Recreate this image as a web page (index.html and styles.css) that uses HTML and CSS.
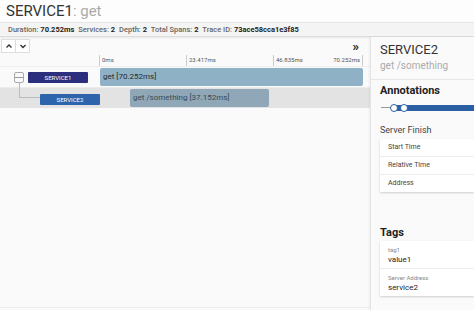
FILE: index.html
```html
<!DOCTYPE html>
<html lang="en">
<head>
    <meta charset="UTF-8">
    <title>Trace 73ace58cca1e3f85</title>
    <link rel="stylesheet" href="styles.css">
</head>
<body>
    <div class="header">
        <span class="svc">SERVICE1</span><span class="op">: get</span>
    </div>
    <div class="stats">
        <span class="lbl">Duration:</span> <b>70.252ms</b>
        <span class="lbl">Services:</span> <b>2</b>
        <span class="lbl">Depth:</span> <b>2</b>
        <span class="lbl">Total Spans:</span> <b>2</b>
        <span class="lbl">Trace ID:</span> <b>73ace58cca1e3f85</b>
    </div>
    <div class="main">
        <div class="timeline">
            <div class="toolbar">
                <div class="btns">
                    <button class="tbtn"><svg width="8" height="8" viewBox="0 0 8 8"><path d="M1.5 5.5 L4 3 L6.5 5.5" fill="none" stroke="#333" stroke-width="1.4"/></svg></button>
                    <button class="tbtn"><svg width="8" height="8" viewBox="0 0 8 8"><path d="M1.5 3 L4 5.5 L6.5 3" fill="none" stroke="#333" stroke-width="1.4"/></svg></button>
                </div>
                <span class="expand">&raquo;</span>
            </div>
            <div class="ruler">
                <div class="ruler-spacer"></div>
                <div class="ticks">
                    <span class="tick">0ms</span>
                    <span class="tick">23.417ms</span>
                    <span class="tick last"><span>46.835ms</span><span>70.252ms</span></span>
                </div>
            </div>
            <div class="row">
                <div class="label">
                    <span class="toggle"></span>
                    <span class="tree-line"></span>
                    <span class="badge s1">SERVICE1</span>
                </div>
                <div class="bars">
                    <div class="bar b1" style="margin-left: 0%; width: 100%">get [70.252ms]</div>
                </div>
            </div>
            <div class="row selected">
                <div class="label lvl2">
                    <span class="badge s2">SERVICE2</span>
                </div>
                <div class="bars">
                    <div class="bar b2" style="margin-left: 11.4%; width: 52.9%">get /something [37.152ms]</div>
                </div>
            </div>
        </div>
        <div class="detail">
            <div class="detail-head">
                <div class="d-svc">SERVICE2</div>
                <div class="d-op">get /something</div>
            </div>
            <div class="section">
                <h4>Annotations</h4>
                <div class="slider">
                    <span class="s-line"></span>
                    <span class="s-track"></span>
                    <span class="dot d1"></span>
                    <span class="dot d2"></span>
                </div>
                <div class="sub">Server Finish</div>
                <div class="card">
                    <div class="kv">Start Time</div>
                    <div class="kv">Relative Time</div>
                    <div class="kv">Address</div>
                </div>
            </div>
            <div class="section tags">
                <h4>Tags</h4>
                <div class="card">
                    <div class="tag">
                        <div class="tkey">tag1</div>
                        <div class="tval">value1</div>
                    </div>
                    <div class="tag">
                        <div class="tkey">Server Address</div>
                        <div class="tval">service2</div>
                    </div>
                </div>
            </div>
        </div>
    </div>
</body>
</html>
```

FILE: styles.css
```css
body {
    margin: 0;
    background-color: #fafafa;
    color: #333;
    font-family: Roboto, "Liberation Sans", sans-serif;
    overflow: hidden;
}
.header {
    height: 22px;
    line-height: 22px;
    padding: 0 6px;
    font-size: 15px;
    background-color: #fdfdfd;
}
.header .svc {
    color: #333;
}
.header .op {
    color: #aaa;
}
.stats {
    height: 13px;
    line-height: 13px;
    padding: 0 6px;
    font-size: 7.5px;
    background-color: #f4f4f4;
    border-top: 1px solid #e6e6e6;
    border-bottom: 1px solid #dcdcdc;
    box-shadow: 0 1px 2px rgba(0, 0, 0, 0.08);
}
.stats .lbl {
    color: #666;
    font-weight: 500;
    margin-left: 2px;
}
.stats b {
    color: #222;
}
.main {
    display: flex;
    height: 274px;
}
.timeline {
    width: 370px;
    display: flex;
    flex-direction: column;
    border-bottom: 1px solid #eee;
    height: 270px;
}
.toolbar {
    display: flex;
    justify-content: space-between;
    align-items: flex-start;
    height: 18px;
    padding-top: 2px;
    box-sizing: border-box;
}
.btns {
    display: flex;
    margin-left: 1px;
}
.tbtn {
    width: 15px;
    height: 14px;
    padding: 0;
    border: 1px solid #ddd;
    background-color: #fff;
    display: flex;
    align-items: center;
    justify-content: center;
    margin-right: -1px;
}
.expand {
    font-size: 13px;
    font-weight: bold;
    line-height: 14px;
    margin-right: 11px;
    margin-top: 1px;
    color: #222;
}
.ruler {
    display: flex;
    height: 11px;
    border-bottom: 1px solid #eee;
}
.ruler-spacer {
    width: 99px;
}
.ticks {
    width: 264px;
    display: flex;
}
.tick {
    flex: 1;
    font-size: 6px;
    color: #555;
    border-left: 1px solid #ccc;
    padding-left: 2px;
    line-height: 9px;
}
.tick.last {
    display: flex;
    justify-content: space-between;
    border-right: 1px solid #ccc;
    padding-right: 2px;
}
.row {
    display: flex;
    height: 20px;
    align-items: center;
}
.row.selected {
    background-color: #e3e3e3;
    border-top: 1px solid #ececec;
}
.label {
    width: 100px;
    height: 100%;
    display: flex;
    align-items: center;
    position: relative;
}
.toggle {
    width: 8px;
    height: 9px;
    margin-left: 14px;
    margin-right: 4px;
    border: 1px solid #aaa;
    border-radius: 2px;
    background: linear-gradient(#999, #999) center / 8px 1px no-repeat;
    background-color: #fafafa;
}
.tree-line {
    position: absolute;
    left: 19px;
    top: 15px;
    width: 21px;
    height: 15px;
    border-left: 1px solid #bbb;
    border-bottom: 1px solid #bbb;
}
.badge {
    width: 60px;
    height: 11px;
    line-height: 11px;
    text-align: center;
    font-size: 6px;
    color: #fff;
    border-radius: 1px;
}
.s1 {
    background-color: #2b2f7e;
}
.s2 {
    background-color: #2e64ab;
    margin-left: 40px;
}
.lvl2 .badge {
    margin-top: 2px;
}
.bars {
    width: 263px;
    height: 100%;
    display: flex;
    align-items: center;
}
.bar {
    height: 18px;
    line-height: 18px;
    font-size: 8px;
    color: #2a2a2a;
    padding-left: 3px;
    box-sizing: border-box;
    border-radius: 2px;
    white-space: nowrap;
    overflow: hidden;
}
.b1 {
    background-color: #8fb1c5;
}
.b2 {
    background-color: #8fa7b6;
    color: #3b4a55;
}
.detail {
    flex: 1;
    border-left: 1px solid #e4e4e4;
    box-shadow: -1px 0 2px rgba(0, 0, 0, 0.05);
    background-color: #fafafa;
    overflow: hidden;
}
.detail-head {
    padding: 4px 0 6px 9px;
    border-bottom: 1px solid #e6e6e6;
}
.d-svc {
    font-size: 13px;
    line-height: 18px;
    color: #333;
}
.d-op {
    font-size: 10px;
    line-height: 14px;
    color: #aaa;
}
.section {
    padding-left: 9px;
}
.section h4 {
    margin: 0;
    font-size: 11px;
    font-weight: bold;
    color: #222;
    line-height: 14px;
    padding-top: 4px;
}
.slider {
    position: relative;
    height: 12px;
    margin-top: 4px;
}
.s-line {
    position: absolute;
    left: 1px;
    top: 5px;
    width: 12px;
    height: 1px;
    background-color: #999;
}
.s-track {
    position: absolute;
    left: 14px;
    right: 0;
    top: 3px;
    height: 6px;
    background-color: #2a5fa3;
}
.dot {
    position: absolute;
    top: 2px;
    width: 6px;
    height: 6px;
    border-radius: 50%;
    background-color: #fff;
    border: 1px solid #2a5fa3;
}
.d1 {
    left: 10px;
}
.d2 {
    left: 20px;
}
.sub {
    font-size: 9px;
    color: #444;
    margin-top: 10px;
    line-height: 12px;
}
.card {
    background-color: #fff;
    box-shadow: 0 1px 2px rgba(0, 0, 0, 0.18);
    margin-top: 3px;
}
.kv {
    font-size: 7px;
    color: #444;
    height: 17px;
    line-height: 17px;
    padding-left: 8px;
    border-bottom: 1px solid #eee;
}
.kv:last-child {
    border-bottom: none;
}
.tags {
    margin-top: 30px;
}
.tags .card {
    margin-top: 1px;
}
.tag {
    padding: 5px 0 3px 8px;
    border-bottom: 1px solid #eee;
}
.tag:last-child {
    border-bottom: none;
}
.tkey {
    font-size: 6px;
    color: #888;
    line-height: 8px;
}
.tval {
    font-size: 8px;
    color: #222;
    line-height: 11px;
}
```
